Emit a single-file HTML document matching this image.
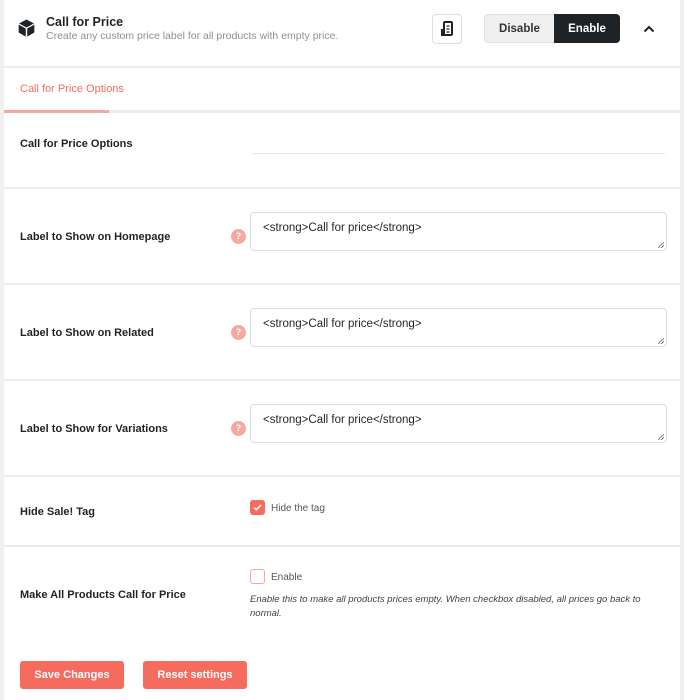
<!DOCTYPE html>
<html><head><style>
*{box-sizing:border-box;margin:0;padding:0}
body{width:684px;height:700px;background:#f0f0f1;font-family:"Liberation Sans",sans-serif;position:relative;overflow:hidden;color:#1d2327}
.c{position:absolute;left:4px;top:0;width:676px;height:700px;background:#fff}
.a{position:absolute}
.hr{position:absolute;left:4px;width:676px;height:2px;background:#ececee}
.lbl{position:absolute;left:20px;font-size:11px;font-weight:bold;color:#1d2327}
.ta{position:absolute;left:250px;width:417px;height:39px;border:1px solid #dcdcde;border-radius:4px;font-size:11.5px;padding:9px 12px;color:#1d2327}
.ta:after{content:"";position:absolute;right:2px;bottom:2px;width:6px;height:6px;background:linear-gradient(135deg,transparent 45%,#888 45%,#888 55%,transparent 55%,transparent 70%,#888 70%,#888 80%,transparent 80%)}
.q{position:absolute;left:231px;width:15px;height:15px;border-radius:50%;background:#f7a79d;color:#fff;font-size:9px;font-weight:bold;text-align:center;line-height:15px}
.btn{position:absolute;top:661px;height:28px;background:#f56c5f;color:#fff;font-size:11px;font-weight:bold;border-radius:3px;text-align:center;line-height:29px}
</style></head><body>
<div class="c"></div>
<svg class="a" style="left:18px;top:19px" width="17" height="18" viewBox="0 0 16 17"><path d="M8 0.5L15 4.3 8 8 1 4.3Z" fill="#1d2327"/><path d="M0.6 5.3L7.3 9V16.6L0.6 12.8Z M15.4 5.3L8.7 9V16.6L15.4 12.8Z" fill="#1d2327"/></svg>
<div class="a" style="left:46px;top:15px;font-size:12.5px;font-weight:bold">Call for Price</div>
<div class="a" style="left:46px;top:30px;font-size:10.5px;color:#8c8f94">Create any custom price label for all products with empty price.</div>
<div class="a" style="left:432px;top:14px;width:30px;height:30px;border:1px solid #dcdcde;border-radius:4px;background:#fff"></div>
<svg class="a" style="left:440px;top:21px" width="14" height="16" viewBox="0 0 14 16"><rect x="4" y="1" width="8" height="13" rx="1" fill="none" stroke="#1d2327" stroke-width="2"/><rect x="1" y="8" width="4" height="7" fill="#1d2327"/><path d="M6.5 5h3M6.5 8h3M6.5 11h3" stroke="#1d2327" stroke-width="1.3"/></svg>
<div class="a" style="left:484px;top:14px;width:70px;height:29px;background:#f0f0f1;border:1px solid #e0e0e2;border-right:none;border-radius:4px 0 0 4px;font-size:11.5px;font-weight:bold;text-align:center;line-height:29px;color:#333">Disable</div>
<div class="a" style="left:554px;top:14px;width:66px;height:29px;background:#1d2327;border-radius:0 4px 4px 0;font-size:11.5px;font-weight:bold;text-align:center;line-height:30px;color:#fff">Enable</div>
<svg class="a" style="left:643px;top:25px" width="12" height="8" viewBox="0 0 12 8"><path d="M1.5 6.5L6 2l4.5 4.5" fill="none" stroke="#1d2327" stroke-width="2"/></svg>
<div class="hr" style="top:66px"></div>
<div class="a" style="left:20px;top:83px;font-size:11px;color:#f56c5f">Call for Price Options</div>
<div class="a" style="left:4px;top:110px;width:676px;height:3px;background:#ececee"></div>
<div class="a" style="left:4px;top:110px;width:105px;height:3px;background:#f7a79d"></div>
<div class="lbl" style="top:138px">Call for Price Options</div>
<div class="a" style="left:252px;top:153px;width:413px;height:1px;background:#e4e4e6"></div>
<div class="hr" style="top:187px"></div>
<div class="lbl" style="top:231px">Label to Show on Homepage</div>
<div class="q" style="top:229px">?</div>
<div class="ta" style="top:212px">&lt;strong&gt;Call for price&lt;/strong&gt;</div>
<div class="hr" style="top:283px"></div>
<div class="lbl" style="top:327px">Label to Show on Related</div>
<div class="q" style="top:325px">?</div>
<div class="ta" style="top:308px">&lt;strong&gt;Call for price&lt;/strong&gt;</div>
<div class="hr" style="top:379px"></div>
<div class="lbl" style="top:423px">Label to Show for Variations</div>
<div class="q" style="top:421px">?</div>
<div class="ta" style="top:404px">&lt;strong&gt;Call for price&lt;/strong&gt;</div>
<div class="hr" style="top:475px"></div>
<div class="lbl" style="top:506px">Hide Sale! Tag</div>
<div class="a" style="left:250px;top:500px;width:15px;height:15px;background:#f56c5f;border-radius:3px"></div>
<svg class="a" style="left:252px;top:502px" width="11" height="11" viewBox="0 0 11 11"><path d="M2 5.5l2.3 2.3L9 3" fill="none" stroke="#fff" stroke-width="1.6"/></svg>
<div class="a" style="left:271px;top:503px;font-size:10px;color:#50575e">Hide the tag</div>
<div class="hr" style="top:545px"></div>
<div class="lbl" style="top:589px">Make All Products Call for Price</div>
<div class="a" style="left:250px;top:569px;width:15px;height:15px;border:1px solid #f7a79d;border-radius:3px"></div>
<div class="a" style="left:271px;top:572px;font-size:10px;color:#50575e">Enable</div>
<div class="a" style="left:250px;top:593px;width:420px;font-size:9.5px;font-style:italic;color:#3c434a;line-height:14px">Enable this to make all products prices empty. When checkbox disabled, all prices go back to normal.</div>
<div class="btn" style="left:20px;width:104px">Save Changes</div>
<div class="btn" style="left:143px;width:104px">Reset settings</div>
</body></html>
